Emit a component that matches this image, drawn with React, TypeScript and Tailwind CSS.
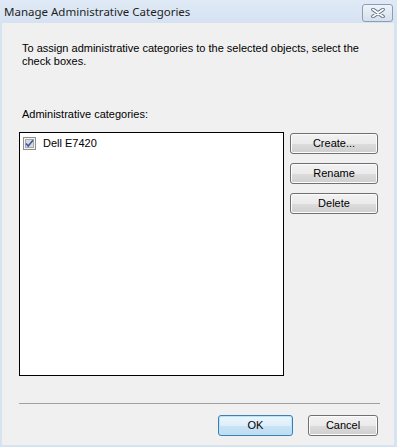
import React from 'react';

const sysFont = { fontFamily: '"Liberation Sans", Arial, sans-serif' };

function WinButton({
  label,
  width,
  isDefault = false,
}: {
  label: string;
  width: string;
  isDefault?: boolean;
}) {
  return (
    <button
      className={`${width} h-[21px] rounded-[3px] border text-[11px] leading-none text-black ${
        isDefault
          ? 'border-[#3c7fb1] shadow-[inset_0_0_0_1px_#b8e4fa] bg-[linear-gradient(#eaf6fd_0%,#dfeef9_50%,#c9e3f6_50%,#bedcf2_100%)]'
          : 'border-[#707070] shadow-[inset_0_0_0_1px_#fcfcfc] bg-[linear-gradient(#f2f2f2_0%,#ebebeb_50%,#dddddd_50%,#cfcfcf_100%)]'
      }`}
      style={sysFont}
    >
      {label}
    </button>
  );
}

function CheckBox() {
  return (
    <svg width="13" height="13" viewBox="0 0 13 13" className="shrink-0">
      <rect x="0.5" y="0.5" width="12" height="12" fill="#f4f4f4" stroke="#8e8f8f" />
      <rect x="2.5" y="2.5" width="8" height="8" fill="#d9d9d9" stroke="#a8a8a8" />
      <path d="M3 6.5 L5.2 9 L10 3.3" fill="none" stroke="#3a57a8" strokeWidth="1.6" />
    </svg>
  );
}

export default function App() {
  return (
    <div className="w-[397px] h-[447px] bg-[#d6e3f1] flex flex-col">
      {/* Title bar */}
      <div className="h-[23px] flex items-center justify-between pl-[4px] pr-[4px] bg-[linear-gradient(#e0eaf6,#d5e2f1)]">
        <span
          className="text-[11.5px] text-[#1e1e1e]"
          style={{ fontFamily: '"Noto Sans", "Open Sans", sans-serif' }}
        >
          Manage Administrative Categories
        </span>
        <div className="w-[31px] h-[18px] mt-[2px] rounded-[3px] border border-[#8c9db6] bg-[linear-gradient(#eef3f9,#d6e0ec)] flex items-center justify-center">
          <svg width="14" height="10" viewBox="0 0 14 10">
            <path
              d="M2 1.5 L12 8.5 M12 1.5 L2 8.5"
              stroke="#5d6b7e"
              strokeWidth="3.6"
              strokeLinecap="round"
            />
            <path
              d="M2 1.5 L12 8.5 M12 1.5 L2 8.5"
              stroke="#ffffff"
              strokeWidth="1.8"
              strokeLinecap="round"
            />
          </svg>
        </div>
      </div>

      {/* Client area */}
      <div
        className="flex-1 ml-[2px] mr-[3px] mb-[2px] bg-[#f0f0f0] flex flex-col text-[11px] leading-[13px] text-black"
        style={sysFont}
      >
        <p className="pt-[19px] pl-[20px]">
          To assign administrative categories to the selected objects, select the
          <br />
          check boxes.
        </p>

        <p className="mt-[40px] pl-[20px]">Administrative categories:</p>

        <div className="mt-[11px] ml-[17px] flex gap-[6px]">
          <div className="w-[265px] h-[244px] border border-black bg-white pl-[3px] pt-[4px]">
            <div className="flex items-center gap-[7px]">
              <CheckBox />
              <span>Dell E7420</span>
            </div>
          </div>
          <div className="mt-[1px] flex flex-col gap-[9px]">
            <WinButton label="Create..." width="w-[88px]" />
            <WinButton label="Rename" width="w-[88px]" />
            <WinButton label="Delete" width="w-[88px]" />
          </div>
        </div>

        <div className="mt-[27px] ml-[17px] w-[361px] h-px bg-[#a0a0a0]" />

        <div className="mt-[11px] pr-[16px] flex justify-end gap-[15px]">
          <WinButton label="OK" width="w-[75px]" isDefault />
          <WinButton label="Cancel" width="w-[70px]" />
        </div>
      </div>
    </div>
  );
}
